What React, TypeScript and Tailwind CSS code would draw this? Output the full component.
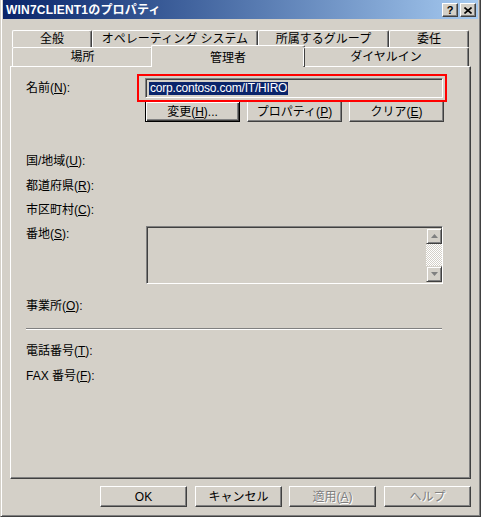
const face = "font-['Liberation_Sans','Noto_Sans_CJK_JP',sans-serif]"

function Tab({ label, w }: { label: string; w: string }) {
  return (
    <div
      className={`${w} h-full flex items-center justify-center rounded-tl-[2px] rounded-tr-[2px] border-t border-l border-t-white border-l-white border-r border-r-[#404040] shadow-[inset_-1px_0_0_#808080] text-[12px] text-black`}
    >
      {label}
    </div>
  )
}

function Button({
  children,
  w,
  def,
  disabled,
}: {
  children: React.ReactNode
  w: string
  def?: boolean
  disabled?: boolean
}) {
  const frame = def
    ? "border border-black shadow-[inset_1px_1px_0_#fff,inset_-1px_-1px_0_#404040,inset_-2px_-2px_0_#808080]"
    : "border border-t-white border-l-white border-r-[#404040] border-b-[#404040] shadow-[inset_-1px_-1px_0_#808080]"
  const text = disabled ? "text-[#808080] [text-shadow:1px_1px_0_#fff]" : "text-black"
  return (
    <div className={`${w} h-full flex items-center justify-center bg-[#d4d0c8] text-[12px] ${frame} ${text}`}>
      {children}
    </div>
  )
}

function Label({ children }: { children: React.ReactNode }) {
  return <div className="text-[12px] leading-[16px] text-black whitespace-nowrap">{children}</div>
}

function ScrollArrow({ up }: { up?: boolean }) {
  return (
    <div className="h-[16px] w-[16px] flex items-center justify-center bg-[#d4d0c8] border border-t-[#d4d0c8] border-l-[#d4d0c8] border-r-[#404040] border-b-[#404040] shadow-[inset_1px_1px_0_#fff,inset_-1px_-1px_0_#808080]">
      <svg width="7" height="4" viewBox="0 0 7 4">
        {up ? <path d="M3.5 0 L7 4 L0 4 Z" fill="#808080" /> : <path d="M0 0 L7 0 L3.5 4 Z" fill="#808080" />}
      </svg>
    </div>
  )
}

export default function App() {
  return (
    <div className={`w-[481px] h-[517px] bg-[#d4d0c8] ${face} flex flex-col border-l border-l-[#d4d0c8] border-r border-r-[#404040] border-b border-b-[#404040] shadow-[inset_1px_0_0_#fff,inset_-1px_-1px_0_#808080] overflow-hidden`}>
      {/* Title bar */}
      <div className="h-[19px] mx-[2px] flex items-center justify-between bg-gradient-to-r from-[#0a246a] to-[#a6caf0] pl-[3px] pr-[2px]">
        <span className="text-white font-bold text-[12px] leading-none tracking-[0.2px]">WIN7CLIENT1のプロパティ</span>
        <div className="flex gap-[2px] mt-[1px]">
          <div className="w-[16px] h-[14px] flex items-center justify-center bg-[#d4d0c8] border border-t-white border-l-white border-r-[#404040] border-b-[#404040] shadow-[inset_-1px_-1px_0_#808080] text-[11px] font-bold leading-none text-black">
            ?
          </div>
          <div className="w-[16px] h-[14px] flex items-center justify-center bg-[#d4d0c8] border border-t-white border-l-white border-r-[#404040] border-b-[#404040] shadow-[inset_-1px_-1px_0_#808080]">
            <svg width="8" height="7" viewBox="0 0 8 7">
              <path d="M0.5 0.5 L7.5 6.5 M7.5 0.5 L0.5 6.5" stroke="#000" strokeWidth="1.6" />
            </svg>
          </div>
        </div>
      </div>

      {/* Tabs */}
      <div className="mt-[11px] ml-[11px] flex h-[17px]">
        <Tab label="全般" w="w-[80px]" />
        <Tab label="オペレーティング システム" w="w-[166px]" />
        <Tab label="所属するグループ" w="w-[131px]" />
        <Tab label="委任" w="w-[80px]" />
      </div>
      <div className="ml-[11px] flex h-[19px] relative z-10">
        <Tab label="場所" w="w-[141px]" />
        <div className="w-[154px] h-[22px] -mt-[2px] -mx-[2px] flex items-start pt-[3px] justify-center rounded-tl-[2px] rounded-tr-[2px] bg-[#d4d0c8] border-t border-l border-t-white border-l-white border-r border-r-[#404040] shadow-[inset_-1px_0_0_#808080] text-[12px] text-black">
          管理者
        </div>
        <Tab label="ダイヤルイン" w="w-[166px]" />
      </div>

      {/* Panel */}
      <div className="mx-[9px] h-[413px] border border-t-white border-l-white border-r-[#404040] border-b-[#404040] shadow-[inset_-1px_-1px_0_#808080] flex flex-col pl-[15px]">
        <div className="relative mt-[11px] flex items-center h-[20px]">
          <div className="w-[119px]">
            <Label>
              名前(<u>N</u>):
            </Label>
          </div>
          <div className="w-[298px] h-[20px] border border-t-[#808080] border-l-[#808080] border-r-white border-b-white shadow-[inset_1px_1px_0_#404040] flex items-center pl-[3px]">
            <span className="bg-[#0a246a] text-white text-[12px] leading-[13px] px-[1px] font-['Liberation_Sans',sans-serif] tracking-[-0.2px]">
              corp.contoso.com/IT/HIRO
            </span>
          </div>
          {/* red annotation frame */}
          <div className="absolute left-[111px] -top-[4px] w-[310px] h-[28px] border-2 border-[#ff0000] pointer-events-none" />
        </div>

        <div className="mt-[3px] h-[21px] flex ml-[119px] gap-[7px]">
          <Button w="w-[95px]" def>
            変更(<u>H</u>)...
          </Button>
          <Button w="w-[95px]">
            プロパティ(<u>P</u>)
          </Button>
          <Button w="w-[95px]">
            クリア(<u>E</u>)
          </Button>
        </div>

        <div className="mt-[27px] h-[24px] flex items-center">
          <Label>
            国/地域(<u>U</u>):
          </Label>
        </div>
        <div className="h-[25px] flex items-center">
          <Label>
            都道府県(<u>R</u>):
          </Label>
        </div>
        <div className="h-[24px] flex items-center">
          <Label>
            市区町村(<u>C</u>):
          </Label>
        </div>

        <div className="mt-[4px] flex">
          <div className="w-[120px]">
            <Label>
              番地(<u>S</u>):
            </Label>
          </div>
          <div className="w-[297px] h-[58px] border border-t-[#808080] border-l-[#808080] border-r-white border-b-white shadow-[inset_1px_1px_0_#404040] flex justify-end pt-[1px] pr-[0px]">
            <div className="w-[16px] h-[54px] flex flex-col justify-between bg-[repeating-conic-gradient(#fff_0_25%,#d4d0c8_0_50%)] bg-[length:2px_2px]">
              <ScrollArrow up />
              <ScrollArrow />
            </div>
          </div>
        </div>

        <div className="mt-[14px] h-[16px] flex items-center">
          <Label>
            事業所(<u>O</u>):
          </Label>
        </div>

        <div className="mt-[14px] w-[416px] h-[2px] border-t border-t-[#808080] border-b border-b-white" />

        <div className="mt-[13px] h-[16px] flex items-center">
          <Label>
            電話番号(<u>T</u>):
          </Label>
        </div>
        <div className="mt-[9px] h-[16px] flex items-center">
          <Label>
            FAX 番号(<u>F</u>):
          </Label>
        </div>
      </div>

      {/* Dialog buttons */}
      <div className="mt-[7px] h-[21px] flex ml-[99px]">
        <Button w="w-[87px]">OK</Button>
        <div className="w-[8px]" />
        <Button w="w-[87px]">キャンセル</Button>
        <div className="w-[7px]" />
        <Button w="w-[87px]" disabled>
          適用(<u>A</u>)
        </Button>
        <div className="w-[8px]" />
        <Button w="w-[87px]" disabled>
          ヘルプ
        </Button>
      </div>
    </div>
  )
}
